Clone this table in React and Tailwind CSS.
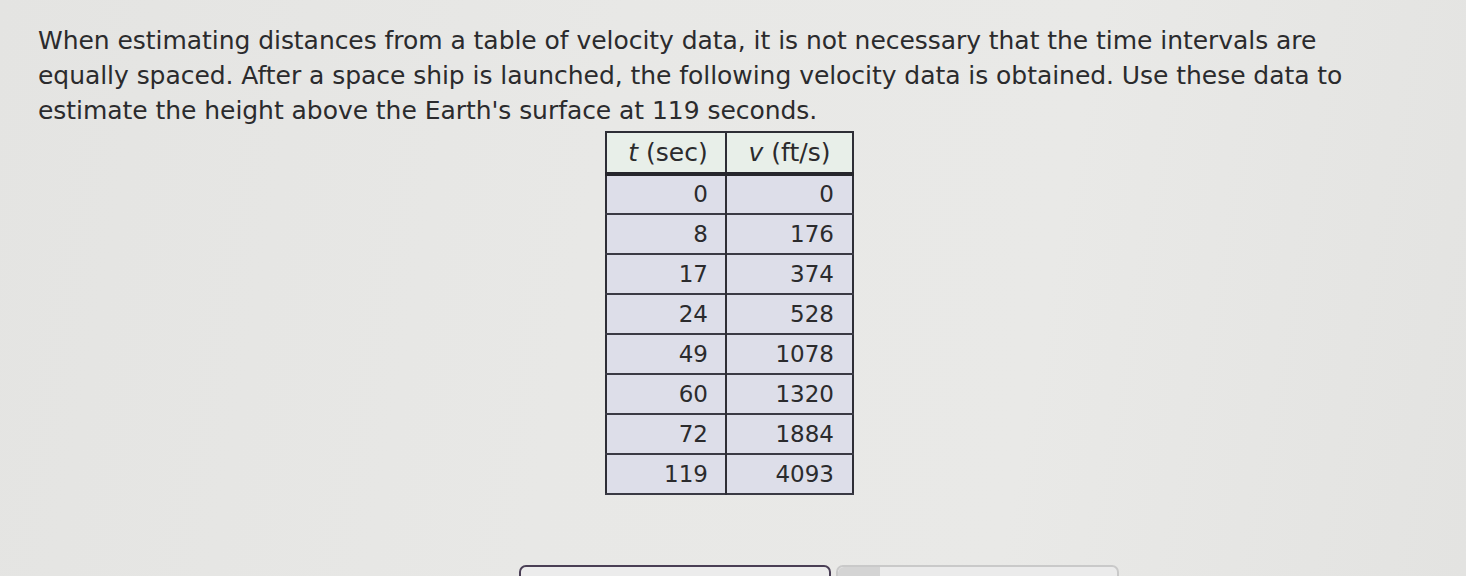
export default function App() {
  const rows = [
    [0, 0],
    [8, 176],
    [17, 374],
    [24, 528],
    [49, 1078],
    [60, 1320],
    [72, 1884],
    [119, 4093],
  ];
  return (
    <div
      className="w-[1466px] h-[576px] overflow-hidden bg-[linear-gradient(100deg,#e4e4e2_0%,#e8e8e6_40%,#e9e9e7_70%,#e3e3e1_100%)] text-[#2b2b2d]"
      style={{ fontFamily: '"DejaVu Sans", Verdana, sans-serif' }}
    >
      <div className="pl-[38px] pr-[45px] pt-[23px]">
        <p className="text-[25px] leading-[35px] tracking-[-0.05px] whitespace-nowrap">
          When estimating distances from a table of velocity data, it is not necessary that the time intervals are
          <br />
          equally spaced. After a space ship is launched, the following velocity data is obtained. Use these data to
          <br />
          estimate the height above the Earth's surface at 119 seconds.
        </p>
        <div className="flex justify-center mt-[3px]">
          <table className="border-collapse text-[23px] border-2 border-[#2e2e36]">
            <thead>
              <tr className="bg-[#e8efe9] border-b-[4px] border-[#26262c]">
                <th className="w-[120px] h-[42px] font-normal text-[25px] text-center pl-[4px] border-r-2 border-[#2e2e36]">
                  <span className="italic">t</span> (sec)
                </th>
                <th className="w-[127px] h-[42px] font-normal text-[25px] text-center">
                  <span className="italic">v</span> (ft/s)
                </th>
              </tr>
            </thead>
            <tbody>
              {rows.map(([t, v]) => (
                <tr key={t} className="bg-[#dddee9] border-b-2 border-[#3a3a44]">
                  <td className="h-[40px] text-right pr-[17px] border-r-2 border-[#2e2e36]">{t}</td>
                  <td className="h-[40px] text-right pr-[18px]">{v}</td>
                </tr>
              ))}
            </tbody>
          </table>
        </div>
        <div className="flex mt-[70px] ml-[481px] gap-[5px]">
          <div className="w-[312px] h-[30px] rounded-[7px] border-2 border-[#4a3f55] bg-[#ececec]" />
          <div className="relative w-[283px] h-[30px] rounded-[7px] border-2 border-[#c9c9c9] bg-[#ebebeb]">
            <div className="absolute left-0 top-0 w-[42px] h-[20px] rounded-tl-[6px] bg-[#d4d4d4]" />
          </div>
        </div>
      </div>
    </div>
  );
}
